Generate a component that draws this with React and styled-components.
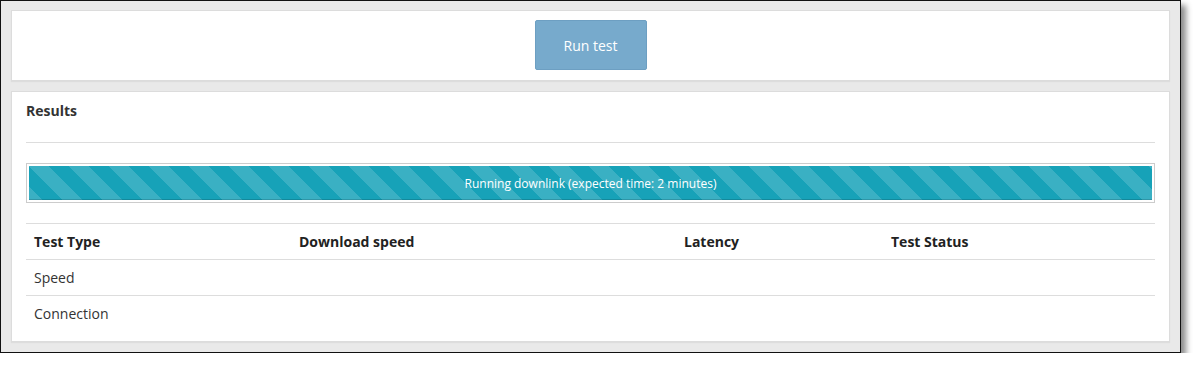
import React from 'react';
import styled, { createGlobalStyle } from 'styled-components';

const Global = createGlobalStyle`
    body {
        margin: 0;
        background: #fff;
        font-family: "Open Sans", "Liberation Sans", sans-serif;
        color: #333;
    }
`;

const Frame = styled.div`
    box-sizing: border-box;
    width: 1181px;
    height: 353px;
    border: 1px solid #111;
    background: #e9e9e9;
    padding: 9px 10px 10px;
    box-shadow: 5px 5px 6px rgba(0, 0, 0, 0.45);
    display: flex;
    flex-direction: column;
    gap: 10px;
`;

const Panel = styled.div`
    background: #fff;
    border: 1px solid #dcdcdc;
    box-shadow: 0 1px 1px rgba(0, 0, 0, 0.05);
`;

const ActionPanel = styled(Panel)`
    display: flex;
    justify-content: center;
    padding: 9px 0 10px;
`;

const RunButton = styled.button`
    width: 112px;
    height: 50px;
    border: 1px solid #6d9fc2;
    border-radius: 2px;
    background: #77aacc;
    color: #fff;
    font-family: inherit;
    font-size: 14px;
    cursor: not-allowed;
`;

const ResultsPanel = styled(Panel)`
    flex: 1;
    padding: 0 14px 9px;
`;

const Heading = styled.div`
    height: 51px;
    box-sizing: border-box;
    padding-top: 9px;
    font-size: 14px;
    font-weight: 700;
    line-height: 20px;
    border-bottom: 1px solid #ddd;
`;

const Progress = styled.div`
    margin: 20px 0;
    border: 1px solid #ccc;
    padding: 2px;
    background: #fff;
`;

const Bar = styled.div`
    height: 34px;
    display: flex;
    align-items: center;
    justify-content: center;
    color: #fff;
    font-size: 12px;
    background-color: #17a2b8;
    background-image: linear-gradient(
        45deg,
        rgba(255, 255, 255, 0.15) 25%,
        transparent 25%,
        transparent 50%,
        rgba(255, 255, 255, 0.15) 50%,
        rgba(255, 255, 255, 0.15) 75%,
        transparent 75%,
        transparent
    );
    background-size: 40px 40px;
    box-shadow: inset 0 -1px 0 rgba(0, 0, 0, 0.15);
`;

const Row = styled.div`
    display: grid;
    grid-template-columns: 265px 385px 207px 1fr;
    height: 36px;
    box-sizing: border-box;
    border-top: 1px solid #ddd;
    font-size: 14px;
    font-weight: ${p => (p.head ? 700 : 400)};
    color: ${p => (p.head ? '#222' : '#333')};
`;

const Cell = styled.div`
    display: flex;
    align-items: center;
    padding: 0 8px;
`;

const columns = ['Test Type', 'Download speed', 'Latency', 'Test Status'];
const rows = ['Speed', 'Connection'];

export default function App() {
    return (
        <>
            <Global />
            <Frame>
                <ActionPanel>
                    <RunButton disabled>Run test</RunButton>
                </ActionPanel>
                <ResultsPanel>
                    <Heading>Results</Heading>
                    <Progress>
                        <Bar>Running downlink (expected time: 2 minutes)</Bar>
                    </Progress>
                    <Row head>
                        {columns.map(c => (
                            <Cell key={c}>{c}</Cell>
                        ))}
                    </Row>
                    {rows.map(r => (
                        <Row key={r}>
                            <Cell>{r}</Cell>
                            <Cell />
                            <Cell />
                            <Cell />
                        </Row>
                    ))}
                </ResultsPanel>
            </Frame>
        </>
    );
}
